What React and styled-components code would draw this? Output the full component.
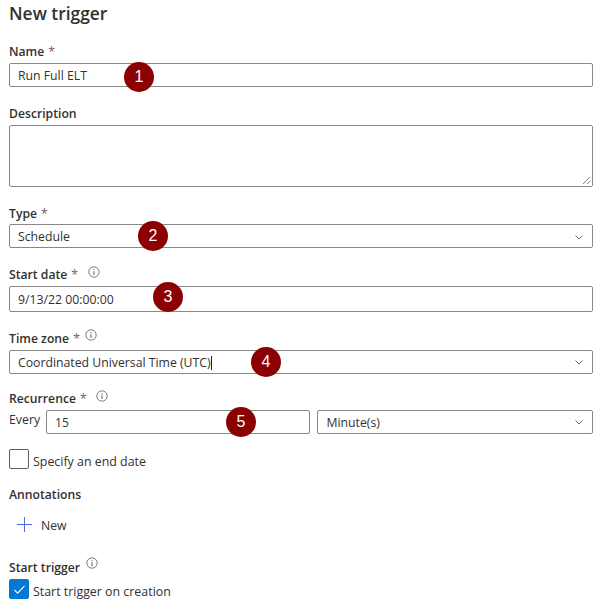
import React from "react";
import styled, { createGlobalStyle } from "styled-components";

const Global = createGlobalStyle`
  html, body { margin: 0; padding: 0; background: #fff; }
  body { font-family: "Open Sans", "Noto Sans", "Liberation Sans", sans-serif; color: #323130; }
`;

const Page = styled.div`
  width: 593px;
  height: 607px;
  box-sizing: border-box;
  padding-left: 9px;
  display: flex;
  flex-direction: column;
  overflow: hidden;
`;

const Title = styled.h1`
  margin: 0 0 15px;
  height: 26px;
  line-height: 26px;
  font-size: 17.4px;
  font-weight: 600;
  color: #323130;
`;

const Field = styled.div`
  position: relative;
  margin-top: ${(p) => p.$top ?? 0}px;
`;

const Label = styled.div`
  height: 22px;
  line-height: ${(p) => p.$line ?? 22}px;
  font-size: 12.2px;
  font-weight: 550;
  color: #323130;
  display: flex;
  align-items: flex-start;
  white-space: nowrap;
`;

const Star = styled.span`
  margin-left: 4px;
  font-weight: 400;
  color: #7a5a60;
`;

const Info = styled.svg`
  width: 12px;
  height: 12px;
  margin-left: ${(p) => p.$gap ?? 8}px;
  margin-top: ${(p) => p.$up ?? 0}px;
  flex: none;
`;

const Box = styled.div`
  box-sizing: border-box;
  height: ${(p) => p.$h ?? 24}px;
  flex: ${(p) => (p.$grow ? `${p.$grow} 0 0` : "none")};
  border: 1px solid #8a8886;
  border-radius: 2px;
  background: #fff;
  padding: ${(p) => p.$pt ?? 0}px 9px 0 8px;
  display: flex;
  align-items: center;
  justify-content: space-between;
  font-size: 12.25px;
  color: #323130;
  white-space: nowrap;
  position: relative;
`;

const Caret = styled.span`
  display: inline-block;
  width: 1px;
  height: 14px;
  background: #201f1e;
  vertical-align: -3px;
`;

const Grip = styled.svg`
  position: absolute;
  right: 1px;
  bottom: 1px;
  width: 9px;
  height: 9px;
`;

const Chevron = styled.svg`
  width: 8px;
  height: 5px;
  flex: none;
  margin-top: 1px;
`;

const Row = styled.div`
  display: flex;
  align-items: flex-start;
`;

const Every = styled.span`
  width: 37px;
  flex: none;
  font-size: 12.3px;
  line-height: 20px;
  color: #323130;
`;

const Pair = styled.div`
  flex: 1;
  display: flex;
  gap: 7px;
`;

const CheckRow = styled.div`
  display: flex;
  align-items: center;
  height: 20px;
  margin-top: ${(p) => p.$top ?? 0}px;
  gap: 4px;
  font-size: 12.4px;
  color: #323130;
`;

const CheckText = styled.span`
  padding-top: 4px;
`;

const Tick = styled.span`
  box-sizing: border-box;
  width: 20px;
  height: 20px;
  border-radius: 2px;
  border: 1px solid ${(p) => (p.$on ? "#0078d4" : "#605e5c")};
  background: ${(p) => (p.$on ? "#0078d4" : "#fff")};
  display: flex;
  align-items: center;
  justify-content: center;
  flex: none;
`;

const Section = styled.div`
  margin-top: ${(p) => p.$top}px;
  height: ${(p) => p.$h ?? 22}px;
  line-height: 24px;
  font-size: 12.2px;
  font-weight: 550;
  color: #323130;
  display: flex;
  align-items: flex-start;
`;

const NewRow = styled.div`
  height: 20px;
  margin-top: 10px;
  padding-left: 8px;
  display: flex;
  align-items: center;
  gap: 9px;
  font-size: 12.25px;
  color: #323130;
`;

const Plus = styled.svg`
  width: 15px;
  height: 15px;
  margin-top: -1px;
  flex: none;
`;

const Badge = styled.span`
  position: absolute;
  width: 30px;
  height: 30px;
  left: ${(p) => p.$x}px;
  top: ${(p) => p.$y}px;
  border-radius: 50%;
  background: #8b0000;
  color: #fff;
  font-family: "Liberation Sans", Arial, sans-serif;
  font-size: 16px;
  display: flex;
  align-items: center;
  justify-content: center;
  z-index: 2;
`;

const InfoIcon = (p) => (
  <Info viewBox="0 0 12 12" {...p}>
    <circle cx="6" cy="6" r="5.2" fill="none" stroke="#605e5c" strokeWidth="0.8" />
    <path d="M6 5.2V9M6 3.2v1" stroke="#605e5c" strokeWidth="1" fill="none" />
  </Info>
);

const Down = () => (
  <Chevron viewBox="0 0 8 5">
    <path d="M0.5 0.5l3.5 3.5 3.5-3.5" fill="none" stroke="#605e5c" strokeWidth="0.9" />
  </Chevron>
);

export default function App() {
  return (
    <Page>
      <Global />
      <Title>New trigger</Title>

      <Field>
        <Label>Name<Star>*</Star></Label>
        <Box>Run Full ELT</Box>
        <Badge $x={115} $y={21}>1</Badge>
      </Field>

      <Field $top={16}>
        <Label>Description</Label>
        <Box $h={62}>
          <Grip viewBox="0 0 9 9">
            <path d="M1 8l7-7M5 8l3-3" stroke="#605e5c" strokeWidth="0.8" fill="none" />
          </Grip>
        </Box>
      </Field>

      <Field $top={15}>
        <Label $line={24}>Type<Star>*</Star></Label>
        <Box $pt={1}>Schedule<Down /></Box>
        <Badge $x={129} $y={19}>2</Badge>
      </Field>

      <Field $top={16}>
        <Label>Start date<Star>*</Star><InfoIcon $gap={10} $up={2} /></Label>
        <Box $h={26}>9/13/22 00:00:00</Box>
        <Badge $x={144} $y={18}>3</Badge>
      </Field>

      <Field $top={16}>
        <Label>Time zone<Star>*</Star><InfoIcon $gap={5} $up={1} /></Label>
        <Box><span>Coordinated Universal Time (UTC)<Caret /></span><Down /></Box>
        <Badge $x={242} $y={19}>4</Badge>
      </Field>

      <Field $top={14}>
        <Label>Recurrence<Star>*</Star><InfoIcon $gap={9} $up={2} /></Label>
        <Row>
          <Every>Every</Every>
          <Pair>
            <Box $grow={264}>15</Box>
            <Box $grow={276}>Minute(s)<Down /></Box>
          </Pair>
        </Row>
        <Badge $x={217} $y={19}>5</Badge>
      </Field>

      <CheckRow $top={15}><Tick /><CheckText>Specify an end date</CheckText></CheckRow>

      <Section $top={14}>Annotations</Section>
      <NewRow>
        <Plus viewBox="0 0 15 15">
          <path d="M7.5 0v15M0 7.5h15" stroke="#4f6bed" strokeWidth="1" fill="none" />
        </Plus>
        New
      </NewRow>

      <Section $top={21} $h={23}>Start trigger<InfoIcon $gap={6} $up={1} /></Section>
      <CheckRow $top={0}>
        <Tick $on>
          <svg width="15" height="15" viewBox="0 0 15 15">
            <path d="M2.5 8l3.2 3.2 6.8-7.4" fill="none" stroke="#fff" strokeWidth="1.1" />
          </svg>
        </Tick>
        <CheckText>Start trigger on creation</CheckText>
      </CheckRow>
    </Page>
  );
}
